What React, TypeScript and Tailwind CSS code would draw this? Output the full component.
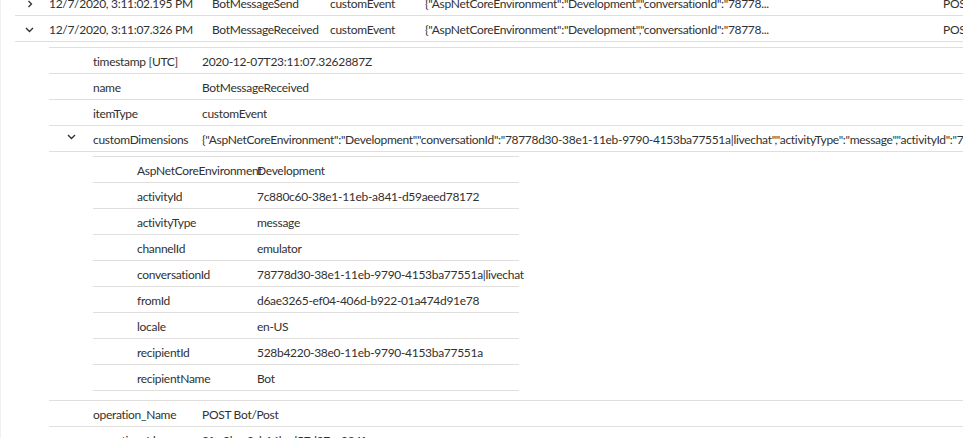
import React from "react";

const FONT = { fontFamily: 'Lato, "Noto Sans", sans-serif' };

function ChevronRight() {
  return (
    <svg width="8" height="8" viewBox="0 0 8 8" className="block">
      <path d="M2.5 1 L5.5 4 L2.5 7" fill="none" stroke="#323130" strokeWidth="1.3" />
    </svg>
  );
}

function ChevronDown() {
  return (
    <svg width="9" height="6" viewBox="0 0 9 6" className="block">
      <path d="M1 1 L4.5 4.5 L8 1" fill="none" stroke="#323130" strokeWidth="1.4" />
    </svg>
  );
}

const JSON_SHORT =
  '{"AspNetCoreEnvironment":"Development","conversationId":"78778...';
const JSON_LONG =
  '{"AspNetCoreEnvironment":"Development","conversationId":"78778d30-38e1-11eb-9790-4153ba77551a|livechat","activityType":"message","activityId":"7c880c60-38e1-11eb-a841-d59aeed78172","channelId":"emulator"}';

function TopRow({ open, ts, name }: { open: boolean; ts: string; name: string }) {
  return (
    <div className="flex h-[26px] items-center border-b border-[#e1dfdd] pt-[2px] whitespace-nowrap">
      <div className="flex w-[34px] shrink-0 justify-end pr-[15px]">
        {open ? <ChevronDown /> : <ChevronRight />}
      </div>
      <div className="w-[163px] shrink-0">{ts}</div>
      <div className="w-[118px] shrink-0">{name}</div>
      <div className="w-[95px] shrink-0">customEvent</div>
      <div className="w-[518px] shrink-0 overflow-hidden">{JSON_SHORT}</div>
      <div className="shrink-0">POST</div>
    </div>
  );
}

function DetailRow({ label, value }: { label: string; value: string }) {
  return (
    <div className="flex h-[26px] items-center border-b border-[#e1dfdd] pt-[2px] whitespace-nowrap">
      <div className="w-[44px] shrink-0" />
      <div className="w-[109px] shrink-0">{label}</div>
      <div className="overflow-hidden">{value}</div>
    </div>
  );
}

function InnerRow({ label, value }: { label: string; value: string }) {
  return (
    <div className="flex h-[26px] items-center border-b border-[#e1dfdd] pt-[2px] whitespace-nowrap">
      <div className="w-[44px] shrink-0" />
      <div className="w-[120px] shrink-0">{label}</div>
      <div>{value}</div>
    </div>
  );
}

const dims: [string, string][] = [
  ["AspNetCoreEnvironment", "Development"],
  ["activityId", "7c880c60-38e1-11eb-a841-d59aeed78172"],
  ["activityType", "message"],
  ["channelId", "emulator"],
  ["conversationId", "78778d30-38e1-11eb-9790-4153ba77551a|livechat"],
  ["fromId", "d6ae3265-ef04-406d-b922-01a474d91e78"],
  ["locale", "en-US"],
  ["recipientId", "528b4220-38e0-11eb-9790-4153ba77551a"],
  ["recipientName", "Bot"],
];

export default function App() {
  return (
    <div
      className="w-[963px] h-[438px] overflow-hidden bg-white border-l border-[#f0f0f0] text-[12px] tracking-[-0.3px] text-[#323130]"
      style={FONT}
    >
      <div className="-mt-[10px] ml-[14px]">
        <TopRow open={false} ts="12/7/2020, 3:11:02.195 PM" name="BotMessageSend" />
        <TopRow open={true} ts="12/7/2020, 3:11:07.326 PM" name="BotMessageReceived" />
      </div>
      <div className="ml-[48px] pt-[5px]">
        <div className="border-t border-[#e1dfdd]">
          <DetailRow label="timestamp [UTC]" value="2020-12-07T23:11:07.3262887Z" />
          <DetailRow label="name" value="BotMessageReceived" />
          <DetailRow label="itemType" value="customEvent" />
          <div className="border-b border-[#e1dfdd]">
            <div className="flex h-[26px] items-center border-b border-[#e1dfdd] whitespace-nowrap">
              <div className="flex w-[44px] shrink-0 justify-center pb-[3px]">
                <ChevronDown />
              </div>
              <div className="w-[109px] shrink-0 pt-[2px]">customDimensions</div>
              <div className="overflow-hidden pt-[2px]">{JSON_LONG}</div>
            </div>
            <div className="pl-[44px] pt-[4px] pb-[9px]">
              <div className="w-[426px] border-t border-[#e1dfdd]">
                {dims.map(([k, v]) => (
                  <InnerRow key={k} label={k} value={v} />
                ))}
              </div>
            </div>
          </div>
          <DetailRow label="operation_Name" value="POST Bot/Post" />
          <DetailRow label="operation_Id" value="3fcc0bcc9cb14bcd57d07ac984f" />
        </div>
      </div>
    </div>
  );
}
